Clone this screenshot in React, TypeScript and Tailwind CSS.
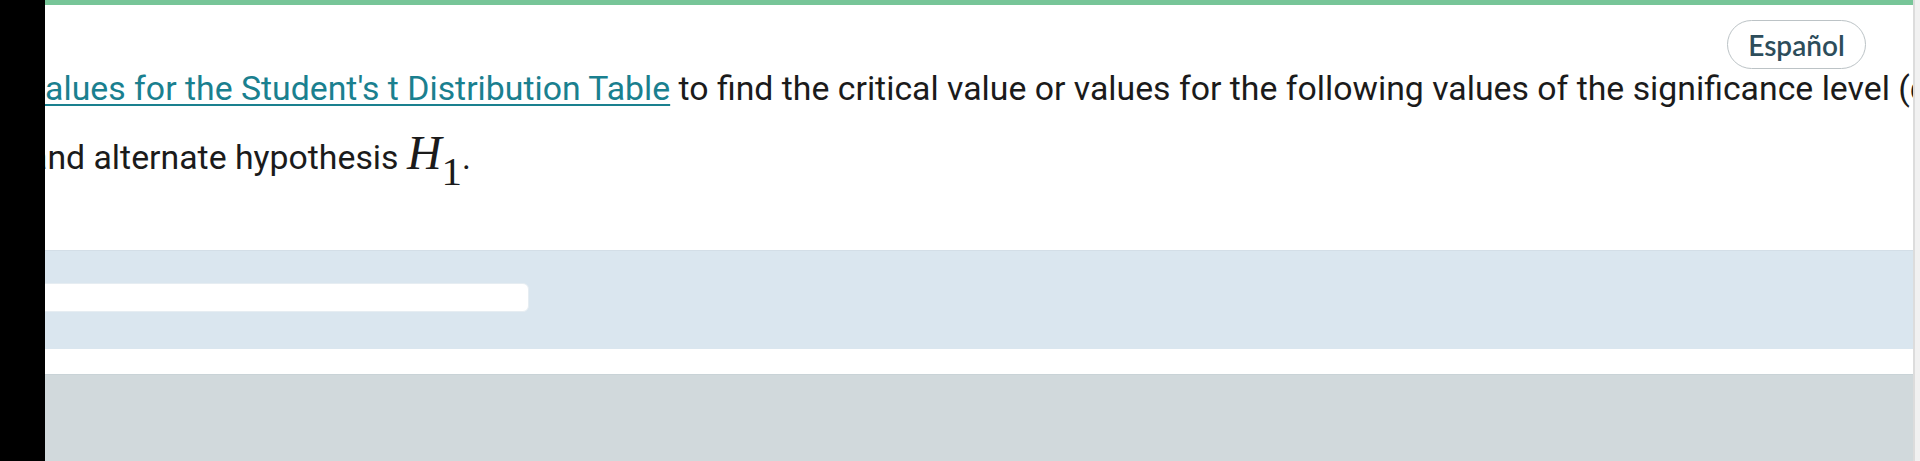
import React from "react";

const sans = { fontFamily: "Roboto, 'Noto Sans', sans-serif" };

export default function App() {
  return (
    <div className="flex h-[461px] w-[1920px] overflow-hidden bg-white text-[#1b1b1b]" style={sans}>
      {/* left black rail */}
      <div className="w-[45px] shrink-0 bg-black" />

      {/* main column */}
      <div className="flex w-[1868px] shrink-0 flex-col overflow-hidden">
        <div className="h-[5px] shrink-0 bg-[#77c598]" />

        <div className="h-[245px] shrink-0">
          <div className="flex justify-end pr-[47px] pt-[15px]">
            <button className="h-[49px] w-[139px] rounded-full border-[1.5px] border-[#bcc3c6] bg-white text-[28px] font-semibold text-[#2d4d5b] [font-family:Lato,'Open_Sans',sans-serif]">
              Español
            </button>
          </div>

          <div className="-ml-[16px] whitespace-nowrap text-[33.8px] leading-[40px]">
            <a className="text-[#1a808f] underline decoration-[2px] underline-offset-[4px]" href="#">
              values for the Student's t Distribution Table
            </a>{" "}
            to find the critical value or values for the following values of the significance level (α) and
          </div>

          <div className="-ml-[16px] mt-[20px] whitespace-nowrap text-[33.8px] leading-[40px]">
            and alternate hypothesis{" "}
            <span className="font-['Liberation_Serif',serif] text-[48px] italic leading-none">H</span>
            <span className="align-[-16px] font-['Liberation_Serif',serif] text-[41px] leading-none">1</span>
            <span>.</span>
          </div>
        </div>

        {/* answer band */}
        <div className="h-[99px] shrink-0 border-t border-[#d3dee7] bg-[#dae6ef] pt-[32px]">
          <div className="-ml-[16px] h-[29px] w-[500px] rounded-[6px] border border-[#e6edf2] bg-white" />
        </div>

        <div className="h-[25px] shrink-0 bg-white" />

        <div className="flex-1 border-t border-[#c9d3d7] bg-[#d1d9dc]" />
      </div>

      {/* scrollbar strip */}
      <div className="w-[7px] shrink-0 border-l-2 border-[#dcdcdc] bg-[#f1f1f1]" />
    </div>
  );
}
